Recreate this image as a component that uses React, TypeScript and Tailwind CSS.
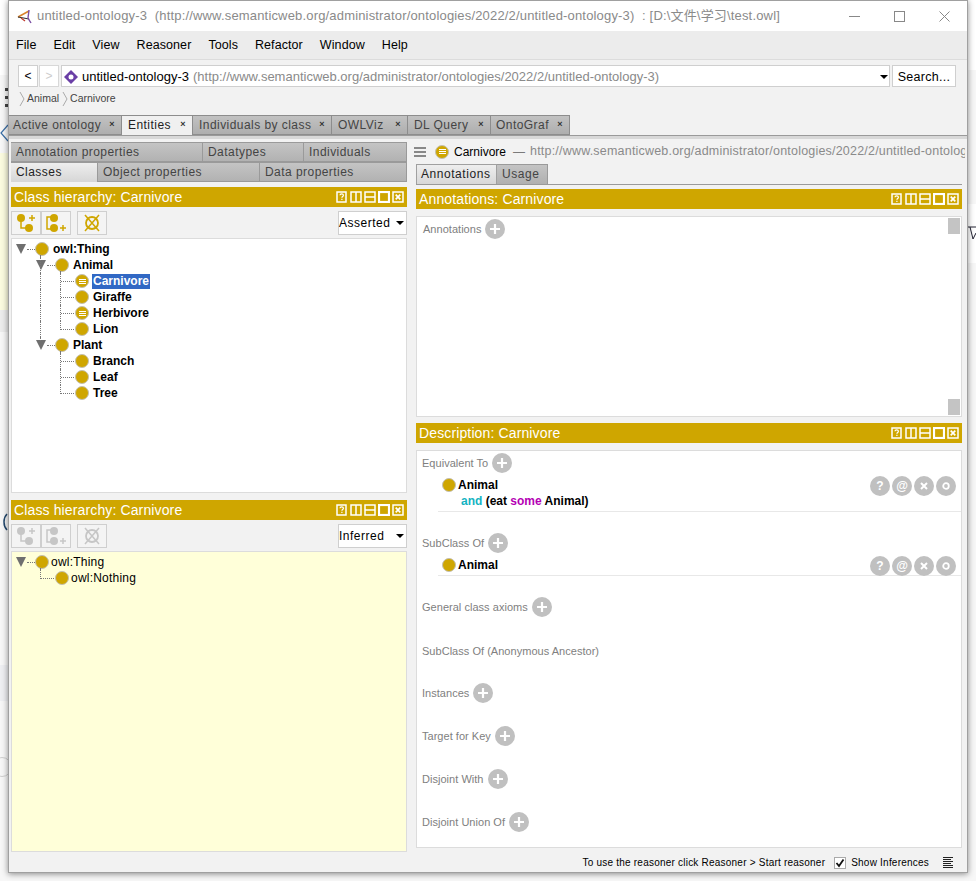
import React from "react";

const GOLD = "bg-[#cfa600]";

function PanelButtons() {
  return (
    <div className="flex items-center gap-[2px] mr-[3px]">
      <svg width="12" height="12" viewBox="0 0 12 12"><rect x="1" y="1" width="9" height="10" fill="none" stroke="#fff" strokeWidth="1.5" /><path d="M4 4.3c0-2 3.4-2 3.4 0 0 1.300-1.500 1.200-1.500 2.500M5.900 7.800v1.200" fill="none" stroke="#fff" strokeWidth="1.200" /></svg>
      <svg width="12" height="12" viewBox="0 0 12 12"><rect x="1" y="1" width="10" height="10" fill="none" stroke="#fff" strokeWidth="1.500" /><path d="M6 1v10" stroke="#fff" strokeWidth="1.500" /></svg>
      <svg width="12" height="12" viewBox="0 0 12 12"><rect x="1" y="1" width="10" height="10" fill="none" stroke="#fff" strokeWidth="1.500" /><path d="M1 6h10" stroke="#fff" strokeWidth="1.500" /></svg>
      <svg width="12" height="12" viewBox="0 0 12 12"><rect x="1" y="1" width="10" height="10" fill="none" stroke="#fff" strokeWidth="2.200" /></svg>
      <svg width="12" height="12" viewBox="0 0 12 12"><rect x="1" y="1" width="10" height="10" fill="none" stroke="#fff" strokeWidth="1.500" /><path d="M3.700 3.700l4.600 4.600M8.300 3.700l-4.600 4.600" stroke="#fff" strokeWidth="1.700" /></svg>
    </div>
  );
}

function GoldHeader({ title }: { title: string }) {
  return (
    <div className={`${GOLD} h-5 flex items-center justify-between text-white text-[14px] leading-5 pl-[3px] shrink-0`}>
      <span className="tracking-[0.13px]">{title}</span>
      <PanelButtons />
    </div>
  );
}

function ClassDot({ equiv = false }: { equiv?: boolean }) {
  return (
    <span className="w-[14px] h-[14px] rounded-full bg-[#cfa600] border border-[#c4c0b0] shrink-0 flex flex-col items-center justify-center gap-[1px]">
      {equiv && (
        <>
          <i className="block w-[7px] h-px bg-white" />
          <i className="block w-[7px] h-px bg-white" />
          <i className="block w-[7px] h-px bg-white" />
        </>
      )}
    </span>
  );
}

function Triangle() {
  return <i className="block w-0 h-0 border-l-[5px] border-r-[5px] border-t-[10px] border-l-transparent border-r-transparent border-t-[#6f6f6f]" />;
}

type RowProps = {
  label: string;
  pad: string;
  expand?: boolean;
  equiv?: boolean;
  selected?: boolean;
  bold?: boolean;
  guides?: string[];
  textGap?: string;
};

function TreeRow({ label, pad, expand, equiv, selected, bold = true, guides = [], textGap = "ml-[3px]" }: RowProps) {
  return (
    <div className={`relative h-4 flex items-center ${pad}`}>
      {guides.map((g) => (
        <i key={g} className={`absolute border-l border-dotted border-[#777] ${g}`} />
      ))}
      {expand ? (
        <span className="w-[19px] shrink-0 flex items-center">
          <Triangle />
          <i className="block w-[8px] border-t border-dotted border-[#777] ml-px" />
        </span>
      ) : (
        <span className="w-[19px] shrink-0 flex items-center justify-end pr-px">
          <i className="block w-[13px] border-t border-dotted border-[#777]" />
        </span>
      )}
      <ClassDot equiv={equiv} />
      <span
        className={`${textGap} text-[12px] leading-[15px] px-px ${bold ? "font-bold" : "tracking-[0.22px]"} ${
          selected ? "bg-[#3168c4] text-white" : "text-black"
        }`}
      >
        {label}
      </span>
    </div>
  );
}

function ToolIcon({ kind, off }: { kind: "sub" | "sib" | "del"; off?: boolean }) {
  const c = off ? "#c6c6c6" : "#cfa600";
  return (
    <svg width="24" height="20" viewBox="0 0 24 20">
      {kind === "sub" && (
        <>
          <circle cx="7" cy="5" r="4" fill={c} />
          <circle cx="15" cy="15" r="4" fill={c} />
          <path d="M7 8v7h5M15 5h6M18 2v6" stroke={c} strokeWidth="1.500" fill="none" />
        </>
      )}
      {kind === "sib" && (
        <>
          <circle cx="10" cy="5" r="4" fill={c} />
          <circle cx="10" cy="15" r="4" fill={c} />
          <path d="M7 4H3v12h4M16 15h6M19 12v6" stroke={c} strokeWidth="1.500" fill="none" />
        </>
      )}
      {kind === "del" && (
        <>
          <circle cx="12" cy="10" r="6" fill="none" stroke={c} strokeWidth="1.800" />
          <path d="M5 2l14 16M19 2L5 18" stroke={c} strokeWidth="1.500" />
        </>
      )}
    </svg>
  );
}

function ToolBtn({ kind, off, extra = "" }: { kind: "sub" | "sib" | "del"; off?: boolean; extra?: string }) {
  return (
    <div className={`w-[30px] h-6 border border-[#cfcfcf] bg-[#f4f4f4] flex items-center justify-center ${extra}`}>
      <ToolIcon kind={kind} off={off} />
    </div>
  );
}

function HierToolbar({ mode, off }: { mode: string; off?: boolean }) {
  return (
    <div className="flex items-center justify-between mt-1 h-6 shrink-0">
      <div className="flex">
        <ToolBtn kind="sub" off={off} />
        <ToolBtn kind="sib" off={off} />
        <ToolBtn kind="del" off={off} extra="ml-[6px]" />
      </div>
      <div className="w-[69px] h-6 bg-white border border-[#cfcfcf] flex items-center justify-between pr-[2px] text-[12px] tracking-[0.5px] text-black">
        <span>{mode}</span>
        <i className="block w-0 h-0 border-l-[4px] border-r-[4px] border-t-[4px] border-l-transparent border-r-transparent border-t-black" />
      </div>
    </div>
  );
}

function SubTab({ label, w, active }: { label: string; w: string; active?: boolean }) {
  return (
    <div
      className={`${w} h-5 px-[5px] text-[12px] leading-[18px] tracking-[0.45px] border-r border-t border-[#9a9a9a] ${
        active ? "bg-gradient-to-b from-[#eeeeee] to-[#d6d6d6] text-[#222] border-b-0" : "bg-gradient-to-b from-[#c4c4c4] to-[#b2b2b2] text-[#444] border-b"
      }`}
    >
      {label}
    </div>
  );
}

function TopTab({ label, w, active, pad = "pl-[6px]" }: { label: string; w: string; active?: boolean; pad?: string }) {
  return (
    <div
      className={`${w} ${pad} h-5 flex items-center justify-between pr-[6px] pb-px text-[12px] tracking-[0.45px] border-r border-t border-[#8d8d8d] ${
        active ? "bg-[#f0f0f0] text-[#222]" : "bg-gradient-to-b from-[#c2c2c2] to-[#aeaeae] text-[#444] border-b"
      }`}
    >
      <span>{label}</span>
      <span className="text-[9px] font-bold text-[#333]">×</span>
    </div>
  );
}

function Plus() {
  return (
    <span className="w-5 h-5 rounded-full bg-[#c0c0c0] flex items-center justify-center ml-[4px] shrink-0">
      <svg width="12" height="12" viewBox="0 0 12 12"><path d="M6 1v10M1 6h10" stroke="#fff" strokeWidth="2.200" /></svg>
    </span>
  );
}

function SectionHead({ label, top, plus = true, pad = "pl-[5px]" }: { label: string; top: string; plus?: boolean; pad?: string }) {
  return (
    <div className={`h-5 flex items-center text-[11px] tracking-[0.03px] text-[#808080] ${pad} ${top}`}>
      <span>{label}</span>
      {plus && <Plus />}
    </div>
  );
}

function ActionDots() {
  return (
    <div className="absolute right-[5px] top-px flex gap-[2px]">
      <span className="w-5 h-5 rounded-full bg-[#c0c0c0] text-white text-[12px] font-bold flex items-center justify-center leading-none">?</span>
      <span className="w-5 h-5 rounded-full bg-[#c0c0c0] text-white text-[12px] font-bold flex items-center justify-center leading-none">@</span>
      <span className="w-5 h-5 rounded-full bg-[#c0c0c0] flex items-center justify-center">
        <svg width="10" height="10" viewBox="0 0 10 10"><path d="M2 2l6 6M8 2l-6 6" stroke="#fff" strokeWidth="2" /></svg>
      </span>
      <span className="w-5 h-5 rounded-full bg-[#c0c0c0] flex items-center justify-center">
        <svg width="10" height="10" viewBox="0 0 10 10"><circle cx="5" cy="5" r="2.800" fill="none" stroke="#fff" strokeWidth="1.800" /></svg>
      </span>
    </div>
  );
}

export default function App() {
  return (
    <div className="relative w-[976px] h-[881px] overflow-hidden bg-[#f7f7f7] font-['Liberation_Sans',Arial,sans-serif]">
      {/* fragments of the windows behind */}
      <div className="absolute left-0 top-0 w-2 h-[75px] bg-white" />
      <div className="absolute left-0 top-[153px] w-2 h-[157px] bg-[#fbfbdf]" />
      <div className="absolute left-0 top-[310px] w-2 h-[22px] bg-[#ececec]" />
      <div className="absolute left-0 top-[665px] w-2 h-9 bg-[#eeeff2]" />
      <div className="absolute left-[5px] top-[88px] flex flex-col gap-[5px]">
        <i className="block w-[3px] h-[3px] bg-[#444]" />
        <i className="block w-[3px] h-[3px] bg-[#444]" />
        <i className="block w-[3px] h-[3px] bg-[#444]" />
      </div>
      <svg width="8" height="18" viewBox="0 0 8 18" className="absolute left-0 top-[124px]"><path d="M8 1L1 9l7 8" fill="none" stroke="#3a6ea5" strokeWidth="1.200" /></svg>
      <svg width="8" height="18" viewBox="0 0 8 18" className="absolute left-0 top-[513px]"><path d="M7 1C3 5 3 13 7 17" fill="none" stroke="#24496e" strokeWidth="1.500" /></svg>
      <div className="absolute left-[-8px] top-[757px] w-[20px] h-[20px] rounded-full border border-[#cfcfcf]" />
      <div className="absolute right-0 top-0 w-2 h-[70px] bg-white" />
      <div className="absolute right-0 top-[204px] w-2 h-[59px] bg-white" />
      <svg width="8" height="20" viewBox="0 0 8 20" className="absolute right-0 top-[224px]"><path d="M0 3h8M2 3l3 12 3-6" fill="none" stroke="#223" strokeWidth="1" /></svg>

      {/* main window */}
      <div className="relative ml-2 w-[960px] h-[873px] flex flex-col bg-[#f2f2f2] border border-[#a0a0a0] shadow-[0_1px_6px_rgba(0,0,0,0.45)]">
        {/* title bar */}
        <div className="h-[30px] bg-white flex items-center shrink-0 pl-2">
          <svg width="15" height="15" viewBox="0 0 15 15" className="shrink-0">
            <path d="M1 8l11-6" stroke="#d9822b" strokeWidth="1.500" fill="none" />
            <path d="M1 8l11 2" stroke="#333" strokeWidth="1.200" fill="none" />
            <path d="M12 1l-1 8 3 5" stroke="#7b4fa3" strokeWidth="1.400" fill="none" />
            <path d="M4 9l4 3" stroke="#c0392b" strokeWidth="1.200" fill="none" />
          </svg>
          <span className="ml-[5px] text-[13px] text-[#8a8a8a] whitespace-pre font-['Liberation_Sans','Noto_Sans_CJK_SC',sans-serif] tracking-[0.17px]">
            untitled-ontology-3 {" "}(http://www.semanticweb.org/administrator/ontologies/2022/2/untitled-ontology-3) {" "}: [D:\文件\学习\test.owl]
          </span>
          <div className="ml-auto flex items-center gap-[34px] pr-[17px]">
            <svg width="11" height="11" viewBox="0 0 11 11"><path d="M0 5.500h11" stroke="#888" /></svg>
            <svg width="11" height="11" viewBox="0 0 11 11"><rect x=".5" y=".5" width="10" height="10" fill="none" stroke="#888" /></svg>
            <svg width="11" height="11" viewBox="0 0 11 11"><path d="M.5.500l10 10M10.500.500l-10 10" stroke="#888" /></svg>
          </div>
        </div>

        {/* menu bar */}
        <div className="h-[29px] bg-[#ececec] border-b border-[#dcdcdc] shrink-0 flex items-center pl-[7px] gap-[17px] text-[12.5px] text-black tracking-[0.08px]">
          {["File", "Edit", "View", "Reasoner", "Tools", "Refactor", "Window", "Help"].map((m) => (
            <span key={m}>{m}</span>
          ))}
        </div>

        {/* address row */}
        <div className="flex items-center pt-[5px] pl-[9px] shrink-0 h-[27px]">
          <div className="w-5 h-[22px] bg-white border border-[#cfcfcf] flex items-center justify-center text-[12px] text-black">&lt;</div>
          <div className="w-5 h-[22px] bg-white border border-[#d8d8d8] flex items-center justify-center text-[12px] text-[#ccc] ml-px">&gt;</div>
          <div className="w-[829px] h-[22px] ml-[2px] pt-px bg-white border border-[#cfcfcf] flex items-center text-[13px]">
            <svg width="14" height="14" viewBox="0 0 14 14" className="ml-[2px] shrink-0">
              <path d="M7 0l7 7-7 7-7-7z" fill="#6a3fa6" />
              <circle cx="7" cy="7" r="2.500" fill="#fff" />
            </svg>
            <span className="ml-[4px] text-black">untitled-ontology-3</span>
            <span className="ml-1 text-[#8a8a8a]">(http://www.semanticweb.org/administrator/ontologies/2022/2/untitled-ontology-3)</span>
            <i className="block ml-auto mr-px w-0 h-0 border-l-[4px] border-r-[4px] border-t-[4px] border-l-transparent border-r-transparent border-t-black" />
          </div>
          <div className="w-[64px] h-[22px] ml-[2px] pt-[3px] bg-white border border-[#cfcfcf] flex items-center justify-center text-[12.5px] tracking-[0.3px] text-black">Search...</div>
        </div>

        {/* breadcrumbs */}
        <div className="h-[28px] shrink-0 pl-[10px] pb-[5px] flex items-center text-[10.5px] text-[#444]">
          <svg width="6" height="14" viewBox="0 0 6 14" className="shrink-0"><path d="M1 0l4 7-4 7" fill="none" stroke="#aaa" /></svg>
          <span className="ml-[2px]">Animal</span>
          <svg width="6" height="14" viewBox="0 0 6 14" className="ml-[3px] shrink-0"><path d="M1 0l4 7-4 7" fill="none" stroke="#aaa" /></svg>
          <span className="ml-[2px]">Carnivore</span>
        </div>

        {/* workspace tabs */}
        <div className="h-5 flex shrink-0">
          <TopTab label="Active ontology" w="w-[113px]" pad="pl-[4px]" />
          <TopTab label="Entities" w="w-[71px]" active />
          <TopTab label="Individuals by class" w="w-[139px]" />
          <TopTab label="OWLViz" w="w-[76px]" />
          <TopTab label="DL Query" w="w-[83px]" />
          <TopTab label="OntoGraf" w="w-[79px]" pad="pl-[5px]" />
        </div>
        <div className="h-[4px] bg-[#d8d8d8] border-t border-[#9a9a9a] shrink-0" />

        {/* content */}
        <div className="flex flex-1 min-h-0 pl-[2px]">
          {/* left column */}
          <div className="w-[396px] flex flex-col pt-[3px] shrink-0">
            <div className="flex">
              <SubTab label="Annotation properties" w="w-[192px]" />
              <SubTab label="Datatypes" w="w-[101px]" />
              <SubTab label="Individuals" w="w-[103px]" />
            </div>
            <div className="flex mb-[5px]">
              <SubTab label="Classes" w="w-[87px]" active />
              <SubTab label="Object properties" w="w-[162px]" />
              <SubTab label="Data properties" w="w-[147px]" />
            </div>
            <GoldHeader title="Class hierarchy: Carnivore" />
            <HierToolbar mode="Asserted" />
            <div className="mt-[3px] h-[255px] shrink-0 bg-white border border-[#dcdcdc] pt-[2px]">
              <TreeRow label="owl:Thing" pad="pl-1" expand guides={["left-[28px] top-[14px] h-[2px]"]} />
              <TreeRow label="Animal" pad="pl-6" expand guides={["left-[28px] top-0 h-full", "left-[48px] top-[14px] h-[2px]"]} />
              <TreeRow label="Carnivore" pad="pl-[44px]" equiv selected guides={["left-[28px] top-0 h-full", "left-[48px] top-0 h-full"]} />
              <TreeRow label="Giraffe" pad="pl-[44px]" guides={["left-[28px] top-0 h-full", "left-[48px] top-0 h-full"]} />
              <TreeRow label="Herbivore" pad="pl-[44px]" equiv guides={["left-[28px] top-0 h-full", "left-[48px] top-0 h-full"]} />
              <TreeRow label="Lion" pad="pl-[44px]" guides={["left-[28px] top-0 h-full", "left-[48px] top-0 h-[9px]"]} />
              <TreeRow label="Plant" pad="pl-6" expand guides={["left-[28px] top-0 h-[4px]", "left-[48px] top-[14px] h-[2px]"]} />
              <TreeRow label="Branch" pad="pl-[44px]" guides={["left-[48px] top-0 h-full"]} />
              <TreeRow label="Leaf" pad="pl-[44px]" guides={["left-[48px] top-0 h-full"]} />
              <TreeRow label="Tree" pad="pl-[44px]" guides={["left-[48px] top-0 h-[9px]"]} />
            </div>
            <div className="h-[7px] shrink-0" />
            <GoldHeader title="Class hierarchy: Carnivore" />
            <HierToolbar mode="Inferred" off />
            <div className="mt-[3px] flex-1 bg-[#ffffd9] border border-[#dcdcdc] pt-[2px]">
              <TreeRow label="owl:Thing" pad="pl-1" expand bold={false} textGap="ml-[1px]" guides={["left-[28px] top-[14px] h-[2px]"]} />
              <TreeRow label="owl:Nothing" pad="pl-6" bold={false} textGap="ml-[1px]" guides={["left-[28px] top-0 h-[9px]"]} />
            </div>
          </div>

          {/* right column */}
          <div className="flex-1 min-w-0 flex flex-col pl-[5px] pr-[5px] ml-[4px]">
            <div className="h-[25px] flex items-center shrink-0 ml-[-2px] overflow-hidden whitespace-nowrap w-[551px]">
              <svg width="12" height="10" viewBox="0 0 12 10" className="shrink-0"><path d="M0 1h12M0 5h12M0 9h12" stroke="#666" strokeWidth="1.600" /></svg>
              <span className="ml-[9px]"><ClassDot equiv /></span>
              <span className="ml-[5px] text-[12px] text-black">Carnivore</span>
              <span className="ml-[7px] text-[12px] text-[#7a7a7a]">—</span>
              <span className="ml-[5px] text-[12.5px] tracking-[0.2px] text-[#8a8a8a]">http://www.semanticweb.org/administrator/ontologies/2022/2/untitled-ontology-3</span>
            </div>
            <div className="flex h-5 shrink-0">
              <div className="w-[81px] h-5 pl-[4px] text-[12px] leading-[19px] tracking-[0.55px] bg-gradient-to-b from-[#eeeeee] to-[#d8d8d8] border-t border-l border-r border-[#a0a0a0] text-[#222]">Annotations</div>
              <div className="w-[51px] h-5 pl-[5px] text-[12px] leading-[19px] tracking-[0.55px] bg-gradient-to-b from-[#c4c4c4] to-[#b0b0b0] border-t border-r border-[#9a9a9a] text-[#444]">Usage</div>
            </div>
            <div className="h-[5px] border-t border-[#9a9a9a] shrink-0" />
            <GoldHeader title="Annotations: Carnivore" />
            <div className="relative mt-[7px] h-[201px] shrink-0 bg-white border border-[#dcdcdc] pt-[2px]">
              <SectionHead label="Annotations" top="" pad="pl-[6px]" />
              <div className="absolute right-[1px] top-[1px] w-3 h-4 bg-[#c4c4c4]" />
              <div className="absolute right-[1px] bottom-[1px] w-3 h-4 bg-[#c4c4c4]" />
            </div>
            <div className="h-[6px] shrink-0" />
            <GoldHeader title="Description: Carnivore" />
            <div className="mt-[7px] h-[398px] shrink-0 bg-white border border-[#dcdcdc] pt-[2px]">
              <SectionHead label="Equivalent To" top="" />
              <div className="relative mt-[2px] ml-[21px] h-[37px] pt-[2px] border-b border-[#e8e8e8] text-[12px] font-bold text-black">
                <div className="flex items-center h-4 pl-[4px]">
                  <ClassDot />
                  <span className="ml-[2px]">Animal</span>
                </div>
                <div className="pl-[23px] h-4 leading-4 font-bold">
                  <span className="text-[#14b3c2]">and</span> (eat <span className="text-[#b400b4]">some</span> Animal)
                </div>
                <ActionDots />
              </div>
              <SectionHead label="SubClass Of" top="mt-[21px]" />
              <div className="relative mt-[2px] ml-[21px] h-[21px] pt-[2px] border-b border-[#e8e8e8] text-[12px] font-bold text-black">
                <div className="flex items-center h-4 pl-[4px]">
                  <ClassDot />
                  <span className="ml-[2px]">Animal</span>
                </div>
                <ActionDots />
              </div>
              <SectionHead label="General class axioms" top="mt-[21px]" />
              <SectionHead label="SubClass Of (Anonymous Ancestor)" top="mt-[24px]" plus={false} />
              <SectionHead label="Instances" top="mt-[22px]" />
              <SectionHead label="Target for Key" top="mt-[23px]" />
              <SectionHead label="Disjoint With" top="mt-[23px]" />
              <SectionHead label="Disjoint Union Of" top="mt-[23px]" />
            </div>
          </div>
        </div>

        {/* status bar */}
        <div className="h-5 shrink-0 flex items-center justify-end pr-[14px] pt-px text-[10px] tracking-[0.22px] text-black">
          <span>To use the reasoner click Reasoner &gt; Start reasoner</span>
          <span className="ml-[9px] w-3 h-3 border border-[#aaa] bg-white flex items-center justify-center">
            <svg width="10" height="10" viewBox="0 0 10 10"><path d="M1.500 5l2.500 3 4.500-6.500" fill="none" stroke="#111" strokeWidth="1.800" /></svg>
          </span>
          <span className="ml-[5px]">Show Inferences</span>
          <svg width="10" height="12" viewBox="0 0 10 12" className="ml-[14px]">
            <path d="M0 .5h10M0 2.500h8M0 4.500h10M0 6.500h8M0 8.500h10M0 10.500h10" stroke="#222" />
          </svg>
        </div>
      </div>
    </div>
  );
}
